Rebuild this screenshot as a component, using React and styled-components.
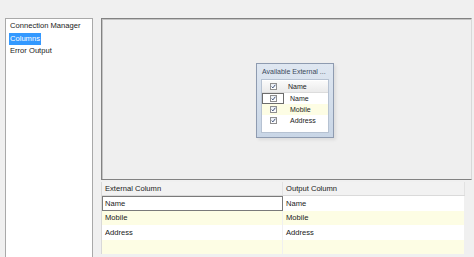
import React from 'react'
import styled, { createGlobalStyle } from 'styled-components'

const Global = createGlobalStyle`
  html, body { margin: 0; padding: 0; }
  body {
    background: #f0f0f0;
    font-family: "Liberation Sans", Arial, sans-serif;
    font-size: 7.6px;
    color: #1a1a1a;
  }
`

const Page = styled.div`
  width: 474px;
  height: 257px;
  overflow: hidden;
  display: flex;
  align-items: flex-start;
  gap: 8px;
  padding: 18px 0 0 5px;
  box-sizing: border-box;
  background: #f0f0f0;
`

const NavList = styled.div`
  width: 88px;
  height: 250px;
  box-sizing: border-box;
  background: #fff;
  border: 1px solid #a9a9a9;
  padding: 1px 3px;
  display: flex;
  flex-direction: column;
  align-items: flex-start;
`

const NavItem = styled.div`
  height: 12.5px;
  line-height: 12.5px;
  padding: 0 1px;
  background: ${p => (p.selected ? '#3399ff' : 'transparent')};
  color: ${p => (p.selected ? '#fff' : '#1a1a1a')};
`

const Right = styled.div`
  width: 371px;
  display: flex;
  flex-direction: column;
`

const Canvas = styled.div`
  height: 162px;
  box-sizing: border-box;
  border: 1px solid #828282;
  border-right-color: #d8d8d8;
  box-shadow: inset 1px 1px 0 #c4c4c4;
  background: #efefef;
  display: flex;
  align-items: center;
  justify-content: center;
  padding-top: 2px;
`

const Window = styled.div`
  width: 78px;
  height: 75px;
  box-sizing: border-box;
  margin-left: 17px;
  border: 1px solid #8e9bb0;
  background: linear-gradient(#dfe7f1, #c9d6e6);
  padding: 2px 4px 4px 4px;
  display: flex;
  flex-direction: column;
  box-shadow: 2px 2px 3px rgba(0, 0, 0, 0.08);
`

const WindowTitle = styled.div`
  font-size: 7px;
  color: #3c4a5c;
  height: 13px;
  line-height: 12px;
  white-space: nowrap;
  padding-left: 1px;
`

const WindowList = styled.div`
  flex: 1;
  background: #fff;
  border: 1px solid #b6c2d2;
  display: flex;
  flex-direction: column;
  padding-top: 1px;
`

const WRow = styled.div`
  height: 11px;
  display: grid;
  grid-template-columns: 22px 1fr;
  align-items: center;
  font-size: 7px;
  background: ${p => (p.head ? 'linear-gradient(#fafafa, #ebebeb)' : p.alt ? '#fdfde4' : '#fff')};
  border-bottom: ${p => (p.head ? '1px solid #dcdcdc' : 'none')};
`

const BoxCell = styled.div`
  height: 100%;
  display: flex;
  align-items: center;
  justify-content: center;
  box-sizing: border-box;
  border: ${p => (p.focus ? '1px solid #6d6d6d' : '1px solid transparent')};
`

const Check = styled.span`
  width: 7px;
  height: 7px;
  box-sizing: border-box;
  border: 1px solid #8f8f8f;
  background: linear-gradient(#e9eef5, #fff);
  display: flex;
  align-items: center;
  justify-content: center;
`

const WLabel = styled.span`
  padding-left: ${p => (p.head ? '4px' : '6px')};
  color: #222;
`

const Grid = styled.div`
  margin-top: 2px;
  width: 363px;
  background: #fff;
  border-left: 1px solid #d8d8d8;
`

const GridRow = styled.div`
  display: grid;
  grid-template-columns: 181px 1fr;
  height: ${p => (p.head ? '13px' : '14.5px')};
  background: ${p => (p.head ? '#f2f2f2' : p.alt ? '#fdfde4' : '#fff')};
  border-bottom: ${p => (p.head ? '1px solid #dadada' : 'none')};
`

const Cell = styled.div`
  box-sizing: border-box;
  display: flex;
  align-items: center;
  border-right: 1px solid ${p => (p.head ? '#e2e2e2' : '#f0f0f0')};
  border: ${p => (p.focus ? '1px solid #7a7a7a' : undefined)};
  padding-left: ${p => (p.focus ? '2px' : '3px')};
`

const Tick = () => (
  <svg width="5" height="5" viewBox="0 0 5 5">
    <path d="M0.7 2.6 L1.9 3.9 L4.3 0.8" fill="none" stroke="#2b3f6a" strokeWidth="0.9" />
  </svg>
)

const cols = ['Name', 'Mobile', 'Address']

export default function App() {
  return (
    <>
      <Global />
      <Page>
        <NavList>
          <NavItem>Connection Manager</NavItem>
          <NavItem selected>Columns</NavItem>
          <NavItem>Error Output</NavItem>
        </NavList>
        <Right>
          <Canvas>
            <Window>
              <WindowTitle>Available External ...</WindowTitle>
              <WindowList>
                <WRow head>
                  <BoxCell><Check><Tick /></Check></BoxCell>
                  <WLabel head>Name</WLabel>
                </WRow>
                {cols.map((c, i) => (
                  <WRow key={c} alt={i === 1}>
                    <BoxCell focus={i === 0}><Check><Tick /></Check></BoxCell>
                    <WLabel>{c}</WLabel>
                  </WRow>
                ))}
              </WindowList>
            </Window>
          </Canvas>
          <Grid>
            <GridRow head>
              <Cell head>External Column</Cell>
              <Cell head>Output Column</Cell>
            </GridRow>
            {cols.map((c, i) => (
              <GridRow key={c} alt={i % 2 === 1}>
                <Cell focus={i === 0}>{c}</Cell>
                <Cell>{c}</Cell>
              </GridRow>
            ))}
            <GridRow alt>
              <Cell />
              <Cell />
            </GridRow>
          </Grid>
        </Right>
      </Page>
    </>
  )
}
